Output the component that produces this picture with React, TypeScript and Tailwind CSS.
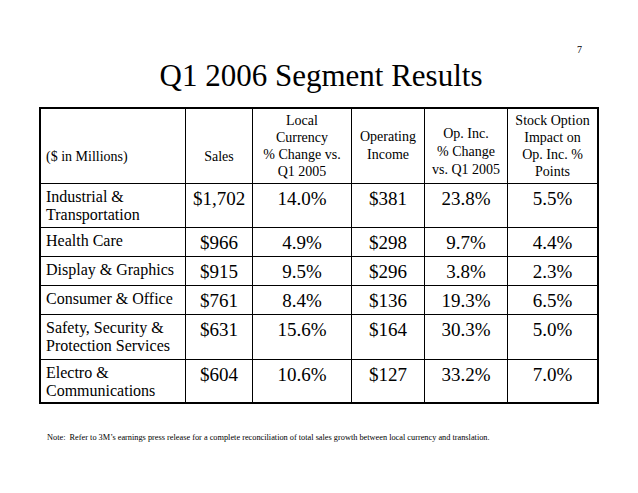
import React from 'react'

type Row = {
  label: string[]
  values: string[]
  height: string
}

const rows: Row[] = [
  { label: ['Industrial &', 'Transportation'], values: ['$1,702', '14.0%', '$381', '23.8%', '5.5%'], height: 'h-[44px]' },
  { label: ['Health Care'], values: ['$966', '4.9%', '$298', '9.7%', '4.4%'], height: 'h-[29px]' },
  { label: ['Display & Graphics'], values: ['$915', '9.5%', '$296', '3.8%', '2.3%'], height: 'h-[29px]' },
  { label: ['Consumer & Office'], values: ['$761', '8.4%', '$136', '19.3%', '6.5%'], height: 'h-[29px]' },
  { label: ['Safety, Security &', 'Protection Services'], values: ['$631', '15.6%', '$164', '30.3%', '5.0%'], height: 'h-[45px]' },
  { label: ['Electro &', 'Communications'], values: ['$604', '10.6%', '$127', '33.2%', '7.0%'], height: 'h-[42px]' },
]

function HeaderCell({ lines, className }: { lines: string[]; className: string }) {
  return (
    <div className={`flex flex-col items-center text-center text-[14px] ${className}`}>
      {lines.map((l) => (
        <span key={l}>{l}</span>
      ))}
    </div>
  )
}

export default function App() {
  return (
    <div className="w-[638px] h-[493px] bg-white text-black font-['Liberation_Serif','Times_New_Roman',serif]">
      <div className="flex justify-end pr-[56px] pt-[44px] text-[10px] leading-[12px]">7</div>
      <h1 className="mt-[2px] pl-[4px] text-center text-[31px] leading-[36px]">Q1 2006 Segment Results</h1>

      <div className="ml-[39px] mt-[13px] w-[560px] border-2 border-black">
        <div className="grid grid-cols-[145px_67px_99px_73px_83px_89px]">
          {/* header */}
          <div className="h-[75px] border-r border-b border-black flex flex-col justify-end pb-[18px] pl-[5px] text-[14px] leading-[17px]">
            ($ in Millions)
          </div>
          <HeaderCell lines={['Sales']} className="h-[75px] border-r border-b border-black justify-end pb-[18px] leading-[17px]" />
          <HeaderCell
            lines={['Local', 'Currency', '% Change vs.', 'Q1 2005']}
            className="h-[75px] border-r border-b border-black justify-center leading-[17px]"
          />
          <HeaderCell lines={['Operating', 'Income']} className="h-[75px] border-r border-b border-black justify-center leading-[18px]" />
          <HeaderCell
            lines={['Op. Inc.', '% Change', 'vs. Q1 2005']}
            className="h-[75px] border-r border-b border-black justify-start pt-[16px] leading-[18px]"
          />
          <HeaderCell
            lines={['Stock Option', 'Impact on', 'Op. Inc. %', 'Points']}
            className="h-[75px] border-b border-black justify-center leading-[17px]"
          />

          {rows.map((row, ri) => {
            const last = ri === rows.length - 1
            return (
              <React.Fragment key={row.label[0]}>
                <div
                  className={`${row.height} border-r border-black ${last ? '' : 'border-b'} pl-[5px] pt-[4px] text-[16px] leading-[18px]`}
                >
                  {row.label.map((l) => (
                    <div key={l}>{l}</div>
                  ))}
                </div>
                {row.values.map((v, vi) => (
                  <div
                    key={vi}
                    className={`${row.height} border-black ${vi < 4 ? 'border-r' : ''} ${last ? '' : 'border-b'} pt-[4px] text-center text-[19px] leading-[22px]`}
                  >
                    {v}
                  </div>
                ))}
              </React.Fragment>
            )
          })}
        </div>
      </div>

      <p className="mt-[29px] pl-[47px] text-[8.3px] leading-[10px] whitespace-nowrap">
        Note:&nbsp; Refer to 3M’s earnings press release for a complete reconciliation of total sales growth between local currency and translation.
      </p>
    </div>
  )
}
